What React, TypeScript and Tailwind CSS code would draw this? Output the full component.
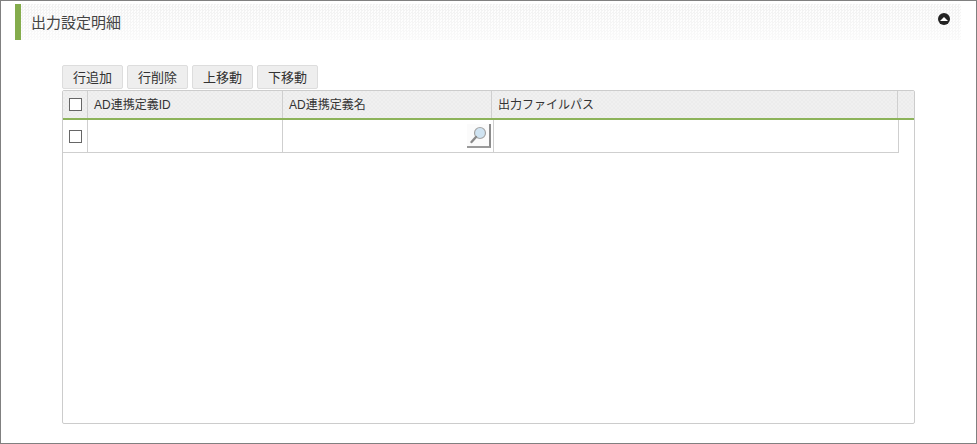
const font = "font-['Liberation_Sans','Noto_Sans_CJK_JP',sans-serif]";

const dotted =
  "bg-[linear-gradient(to_bottom,transparent,rgba(255,255,255,0.6)),repeating-conic-gradient(#f1f1f1_0_25%,#fdfdfd_0_50%)] bg-[size:100%_100%,3px_3px]";

const headerDots =
  "bg-[repeating-conic-gradient(#ececec_0_25%,#f0f0f0_0_50%)] bg-[length:4px_4px]";

const ToolButton = ({ label }: { label: string }) => (
  <button className="w-[61px] h-[24px] bg-[#eeeeee] border border-[#dddddd] rounded-[2px] text-[13px] leading-none text-[#333333]">
    {label}
  </button>
);

const Check = () => (
  <span className="block w-[13px] h-[13px] bg-white border border-[#666666]" />
);

const Magnifier = () => (
  <span className="flex items-center justify-center mr-[2px] w-[24px] h-[24px] bg-[#fbfbfb] border-r-2 border-b-2 border-r-[#8c8c8c] border-b-[#9a9a9a]">
    <svg width="20" height="20" viewBox="0 0 20 20">
      <circle cx="12" cy="8" r="5.5" fill="#cfe3f1" stroke="#a5a5a5" strokeWidth="1.2" />
      <path d="M8 12 L3.5 17" stroke="#8a8a8a" strokeWidth="2.4" strokeLinecap="round" />
    </svg>
  </span>
);

export default function App() {
  return (
    <div className={`${font} w-[977px] h-[444px] bg-white border border-[#808080] pt-[3px] text-[#333333]`}>
      <div className="flex items-center ml-[14px] mr-[15px] h-[36px] bg-white">
        <div className="w-[6px] h-full bg-[#84ac4c]" />
        <div className={`flex-1 h-full flex items-center justify-between pl-[10px] pr-[11px] ${dotted}`}>
          <h2 className="text-[15px] font-normal leading-none text-[#444444]">出力設定明細</h2>
          <span className="flex items-center justify-center w-[12px] h-[12px] mb-[6px] rounded-full bg-[#222222]">
            <span className="block w-0 h-0 border-x-[4px] border-x-transparent border-b-[4px] border-b-white" />
          </span>
        </div>
      </div>

      <div className="flex gap-[4px] ml-[61px] mt-[25px]">
        <ToolButton label="行追加" />
        <ToolButton label="行削除" />
        <ToolButton label="上移動" />
        <ToolButton label="下移動" />
      </div>

      <div className="ml-[61px] mt-[1px] w-[853px] h-[334px] border border-[#cccccc] rounded-[2px] overflow-hidden">
        <div className={`flex h-[29px] border-b-2 border-[#8cb35a] text-[12px] ${headerDots}`}>
          <div className="w-[25px] flex items-center justify-center border-r border-[#cfcfcf]">
            <Check />
          </div>
          <div className="w-[195px] flex items-center pl-[6px] border-r border-[#cfcfcf]">AD連携定義ID</div>
          <div className="w-[209px] flex items-center pl-[6px] border-r border-[#cfcfcf]">AD連携定義名</div>
          <div className="w-[406px] flex items-center pl-[6px] border-r border-[#cfcfcf]">出力ファイルパス</div>
          <div className="flex-1" />
        </div>
        <div className="flex h-[33px] w-[836px] border-b border-r border-[#cfcfcf]">
          <div className="w-[25px] flex items-center justify-center pt-[1px] border-r border-[#cfcfcf]">
            <Check />
          </div>
          <div className="w-[195px] border-r border-[#cfcfcf]" />
          <div className="w-[211px] flex items-center justify-end border-r border-[#cfcfcf]">
            <Magnifier />
          </div>
          <div className="flex-1" />
        </div>
      </div>
    </div>
  );
}
